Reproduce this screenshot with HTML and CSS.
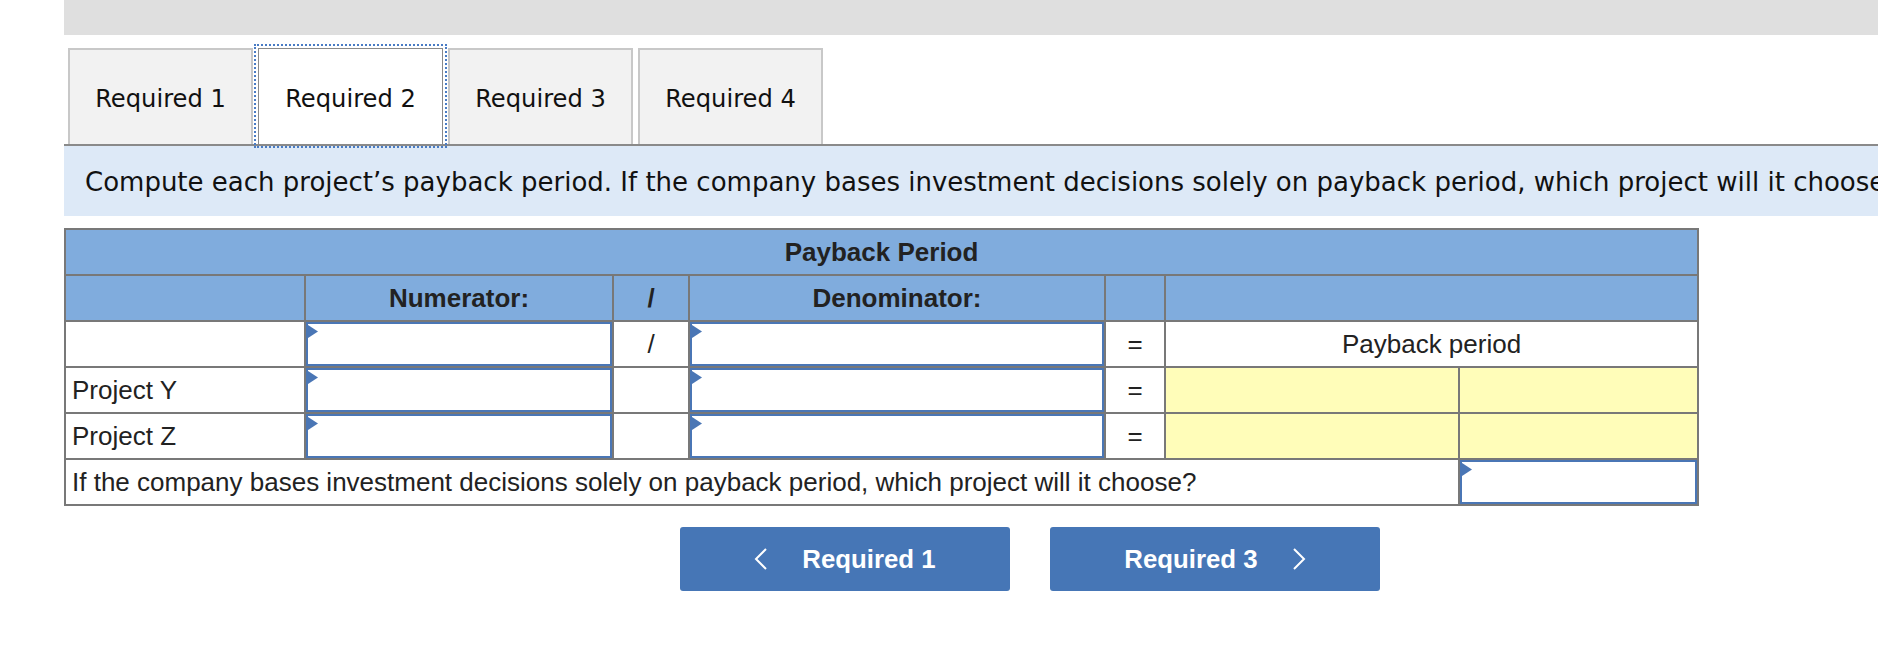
FILE: index.html
```html
<!DOCTYPE html>
<html lang="en">
<head>
<meta charset="utf-8">
<title>Payback Period</title>
<link rel="stylesheet" href="styles.css">
</head>
<body>
<div class="page">
  <div class="topbar"></div>

  <div class="tabs">
    <div class="tab">Required 1</div>
    <div class="tab active">Required 2</div>
    <div class="tab">Required 3</div>
    <div class="tab">Required 4</div>
  </div>

  <div class="prompt">Compute each project’s payback period. If the company bases investment decisions solely on payback period, which project will it choose?</div>

  <table class="grid">
    <colgroup>
      <col class="c-label">
      <col class="c-num">
      <col class="c-div">
      <col class="c-den">
      <col class="c-eq">
      <col class="c-res">
      <col class="c-unit">
    </colgroup>
    <tr class="head">
      <th colspan="7">Payback Period</th>
    </tr>
    <tr class="head">
      <th></th>
      <th>Numerator:</th>
      <th>/</th>
      <th>Denominator:</th>
      <th></th>
      <th colspan="2"></th>
    </tr>
    <tr>
      <td></td>
      <td class="in"><div class="field"><span class="flag"></span></div></td>
      <td class="sym">/</td>
      <td class="in"><div class="field"><span class="flag"></span></div></td>
      <td class="sym">=</td>
      <td colspan="2" class="center">Payback period</td>
    </tr>
    <tr>
      <td class="label">Project Y</td>
      <td class="in"><div class="field"><span class="flag"></span></div></td>
      <td></td>
      <td class="in"><div class="field"><span class="flag"></span></div></td>
      <td class="sym">=</td>
      <td class="calc"></td>
      <td class="calc"></td>
    </tr>
    <tr>
      <td class="label">Project Z</td>
      <td class="in"><div class="field"><span class="flag"></span></div></td>
      <td></td>
      <td class="in"><div class="field"><span class="flag"></span></div></td>
      <td class="sym">=</td>
      <td class="calc"></td>
      <td class="calc"></td>
    </tr>
    <tr>
      <td colspan="6" class="label">If the company bases investment decisions solely on payback period, which project will it choose?</td>
      <td class="in"><div class="field"><span class="flag"></span></div></td>
    </tr>
  </table>

  <div class="nav">
    <div class="btn">
      <svg class="chev" width="14" height="22" viewBox="0 0 14 22"><polyline points="12,1 2,11 12,21" fill="none" stroke="#fff" stroke-width="2"/></svg>
      <span>Required 1</span>
    </div>
    <div class="btn">
      <span>Required 3</span>
      <svg class="chev" width="14" height="22" viewBox="0 0 14 22"><polyline points="2,1 12,11 2,21" fill="none" stroke="#fff" stroke-width="2"/></svg>
    </div>
  </div>
</div>
</body>
</html>
```

FILE: styles.css
```css
html, body {
  margin: 0;
  padding: 0;
  background: #ffffff;
  overflow: hidden;
}

.page {
  padding-left: 64px;
}

.topbar {
  height: 35px;
  background: #dfdfdf;
}

.tabs {
  display: flex;
  gap: 5px;
  margin-top: 13px;
  padding-left: 4px;
  height: 96px;
}

.tab {
  width: 185px;
  box-sizing: border-box;
  border: 2px solid #c8c8c8;
  border-bottom: none;
  background: #f2f2f2;
  display: flex;
  align-items: center;
  justify-content: center;
  padding-top: 4px;
  font-family: "DejaVu Sans", Verdana, sans-serif;
  font-size: 24.2px;
  color: #111;
}

.tab.active {
  position: relative;
  z-index: 1;
  background: #ffffff;
  border: 1px solid #8a8a8a;
  border-bottom: none;
  padding-top: 4px;
  outline: 2px dotted #4a7cc4;
  outline-offset: 2px;
}

.prompt {
  box-sizing: border-box;
  height: 72px;
  border-top: 2px solid #8a8a8a;
  background: #dde9f7;
  padding-left: 21px;
  padding-top: 2px;
  display: flex;
  align-items: center;
  white-space: nowrap;
  font-family: "DejaVu Sans", Verdana, sans-serif;
  font-size: 26px;
  color: #111;
}

.grid {
  margin-top: 12px;
  margin-left: 0;
  border-collapse: collapse;
  table-layout: fixed;
  width: 1633px;
  font-family: "Liberation Sans", Arial, sans-serif;
  font-size: 26px;
  color: #222;
}

.c-label { width: 240px; }
.c-num { width: 308px; }
.c-div { width: 76px; }
.c-den { width: 416px; }
.c-eq { width: 60px; }
.c-res { width: 294px; }
.c-unit { width: 239px; }

.grid tr {
  height: 46px;
}

.grid th,
.grid td {
  border: 2px solid #787878;
  padding: 0;
  height: 44px;
}

.grid th {
  background: #80acdd;
  font-weight: bold;
  text-align: center;
  color: #222;
}

.grid td.label {
  padding-left: 6px;
  text-align: left;
}

.grid td.sym,
.grid td.center {
  text-align: center;
}

.grid td.calc {
  background: #fffdb9;
}

.grid td.in {
  padding: 0;
}

.field {
  position: relative;
  box-sizing: border-box;
  height: 44px;
  border: 2px solid #4a76b5;
  background: #ffffff;
}

.flag {
  position: absolute;
  left: 0;
  top: 1px;
  width: 10px;
  height: 13px;
  background: #4a76b5;
  clip-path: polygon(0 0, 100% 50%, 0 100%);
}

.nav {
  display: flex;
  gap: 40px;
  margin-top: 21px;
  margin-left: 616px;
}

.btn {
  width: 330px;
  height: 64px;
  border-radius: 3px;
  background: #4676b6;
  color: #ffffff;
  display: flex;
  align-items: center;
  justify-content: center;
  gap: 34px;
  font-family: "Liberation Sans", Arial, sans-serif;
  font-weight: bold;
  font-size: 25.8px;
}

.chev {
  display: block;
}
```
